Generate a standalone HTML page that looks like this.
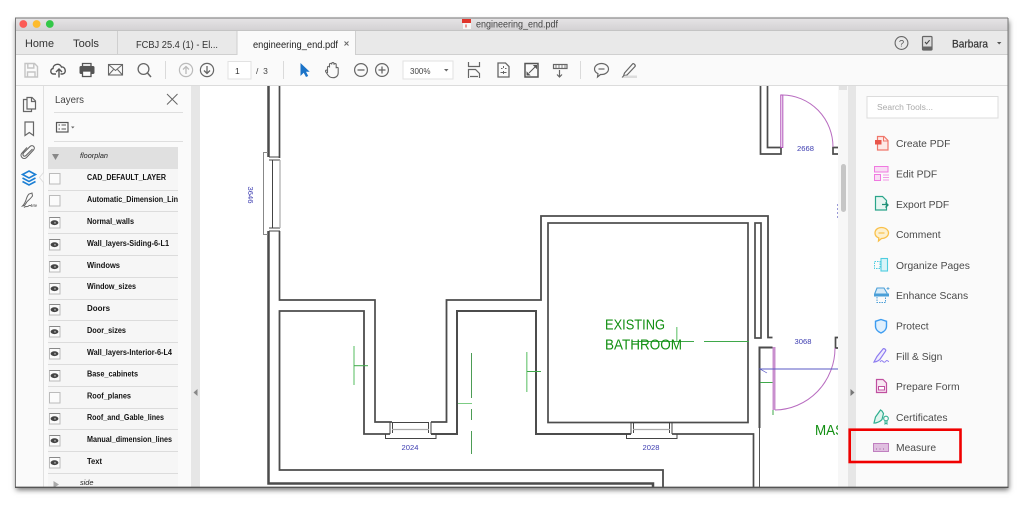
<!DOCTYPE html>
<html><head><meta charset="utf-8"><title>engineering_end.pdf</title>
<style>
html,body{margin:0;padding:0;background:#fff;width:1024px;height:505px;overflow:hidden}
#shadow{position:absolute;left:15px;top:18px;width:993px;height:469px;box-shadow:1px 3px 5px rgba(0,0,0,.55)}
svg{position:absolute;left:0;top:0;font-family:"Liberation Sans",sans-serif;filter:blur(.3px)}
.lay{font-size:8px;font-weight:bold;fill:#111}
.tool{font-size:10.3px;fill:#4a4a4a}
.dim{font-size:7.6px;fill:#3c3cb0}
.ic{fill:none;stroke:#666;stroke-width:1.4}
.w{fill:none;stroke:#4c4c4c;stroke-width:1.7}
.wt{fill:none;stroke:#555;stroke-width:1}
.gr{fill:none;stroke:#3fa84a;stroke-width:1}
</style></head><body>
<div id="shadow"></div>
<svg width="1024" height="505" viewBox="0 0 1024 505" xmlns="http://www.w3.org/2000/svg">
<defs>
<linearGradient id="tb" x1="0" y1="0" x2="0" y2="1"><stop offset="0" stop-color="#e6e4e6"/><stop offset="1" stop-color="#d2d0d2"/></linearGradient>
<clipPath id="docclip"><rect x="200" y="86" width="638" height="401"/></clipPath>
<g id="eye"><rect x="49.5" y="0" width="10.5" height="10.5" fill="#fbfbfb" stroke="#bbb"/><path d="M49.5 0H60" stroke="#888" stroke-width="1"/><ellipse cx="54.5" cy="5.2" rx="3.9" ry="2.4" fill="#444"/><circle cx="55" cy="5.2" r="1" fill="#999"/></g>
<g id="box"><rect x="49.5" y="0" width="10.5" height="10.5" fill="#fbfbfb" stroke="#bbb"/></g>
</defs>

<!-- window -->
<rect x="15" y="18" width="993" height="469" fill="#fafafa"/>
<rect x="15" y="18" width="993" height="13" fill="url(#tb)"/>
<rect x="15" y="30.5" width="993" height="24" fill="#e9e9e9"/>
<path d="M15 30.5H1008" stroke="#c4c4c4"/>
<rect x="15" y="55" width="993" height="30" fill="#fafafa"/>
<path d="M15 54.5H237M356 54.5H1008" stroke="#d0d0d0"/>
<path d="M15 85.5H1008" stroke="#dcdcdc"/>
<circle cx="23.3" cy="24" r="3.9" fill="#fc5b57"/>
<circle cx="36.6" cy="24" r="3.9" fill="#fdbb2e"/>
<circle cx="49.8" cy="24" r="3.9" fill="#33c748"/>

<!-- title -->
<rect x="463" y="20" width="8" height="9" fill="#f6f6f6"/><rect x="462" y="19" width="9" height="4" fill="#e0352b"/><path d="M466 24.5v3" stroke="#e0352b"/>
<text x="476" y="27.5" font-size="9.8" fill="#444" textLength="82" lengthAdjust="spacingAndGlyphs">engineering_end.pdf</text>

<!-- tabs -->
<text x="25" y="47" font-size="11.2" fill="#333" textLength="29" lengthAdjust="spacingAndGlyphs">Home</text>
<text x="73" y="47" font-size="11.2" fill="#333" textLength="26" lengthAdjust="spacingAndGlyphs">Tools</text>
<path d="M117.5 31V54M237 31V55" stroke="#cfcfcf"/>
<text x="136" y="48" font-size="10" fill="#333" textLength="82" lengthAdjust="spacingAndGlyphs">FCBJ 25.4 (1) - El...</text>
<rect x="237.5" y="31" width="118" height="24.5" fill="#fafafa"/>
<path d="M237 31V55M355.500 31V55" stroke="#cfcfcf"/>
<text x="253" y="48" font-size="10" fill="#222" textLength="85" lengthAdjust="spacingAndGlyphs">engineering_end.pdf</text>
<path d="M344.500 41.500l4 4M348.500 41.500l-4 4" stroke="#666" stroke-width="1"/>
<circle cx="901.500" cy="43" r="6.400" fill="none" stroke="#666" stroke-width="1.100"/>
<text x="901.500" y="46.500" font-size="9.500" fill="#555" text-anchor="middle">?</text>
<rect x="922.500" y="36.500" width="9.500" height="13.500" rx="1" fill="#ddd" stroke="#666" stroke-width="1.200"/><rect x="922" y="46.500" width="10.500" height="3.500" fill="#666"/><path d="M925 42l1.600 1.800 3-3.600" fill="none" stroke="#444" stroke-width="1.100"/>
<text x="952" y="47.300" font-size="11" fill="#333" stroke="#333" stroke-width=".2" textLength="36" lengthAdjust="spacingAndGlyphs">Barbara</text>
<path d="M997 42h4.400l-2.200 2.500z" fill="#555"/>

<!-- toolbar -->
<g class="ic">
<path d="M25 63.500h9.500l3 3v10.500h-12.500z" stroke="#c4c4c4"/><path d="M27.800 64v4h6v-4M27.500 77v-5h7.500v5" stroke="#c4c4c4"/>
<path d="M56 74h-2.500c-3.500 0-3.500-5-.5-5.500 0-4.500 7-6 8.500-1.500 4-.5 5.500 6.500 1 7h-2" stroke="#555"/><path d="M59 77.500v-8.500M56 72l3-3 3 3" stroke="#555"/>
</g>
<path d="M82.500 63.500h8.500v3h-8.500z" fill="none" stroke="#555" stroke-width="1.300"/><rect x="79.500" y="66" width="15" height="8" rx="1.500" fill="#555"/><rect x="82.500" y="71" width="8.500" height="5.500" fill="#fff" stroke="#555" stroke-width="1.300"/>
<rect x="108.500" y="64.500" width="14" height="10.500" fill="none" stroke="#666" stroke-width="1.100"/><path d="M108.500 64.500l7 6 7-6M108.500 75l5-5.500M122.500 75l-5-5.500" fill="none" stroke="#666" stroke-width="1"/>
<circle cx="143.500" cy="69" r="5.400" fill="none" stroke="#666" stroke-width="1.300"/><path d="M147.500 73l3.500 4" stroke="#666" stroke-width="1.500"/>
<path d="M165.500 61V79" stroke="#dadada"/>
<circle cx="186" cy="70" r="6.600" fill="none" stroke="#bbb" stroke-width="1.200"/><path d="M186 74V66.500M183 69.500l3-3 3 3" fill="none" stroke="#bbb" stroke-width="1.300"/>
<circle cx="207" cy="70" r="6.600" fill="none" stroke="#666" stroke-width="1.200"/><path d="M207 66V73.500M204 70.500l3 3 3-3" fill="none" stroke="#666" stroke-width="1.300"/>
<rect x="228" y="61.500" width="23" height="17.500" fill="#fff" stroke="#e2e2e2"/>
<text x="235" y="74" font-size="8.500" fill="#333">1</text>
<text x="256" y="74" font-size="8.500" fill="#444" xml:space="preserve">/  3</text>
<path d="M283.500 61V79" stroke="#dadada"/>
<path d="M300.500 63v13l3.200-3.300 2.300 4.300 2.200-1-2.200-4.200h3.700z" fill="#1a73c8"/>
<path d="M327.500 73v-5.500c0-1.500 2-1.500 2 0v-3c0-1.500 2.200-1.500 2.200 0v-.800c0-1.500 2.300-1.500 2.300 0v1c0-1.500 2.200-1.500 2.200 0v3.500c0-1 2-1 2 0v4.500c0 3-2 5-5 5s-4-1-5.500-3l-2-3c-.8-1.300 1-2.200 1.800-1.200z" fill="none" stroke="#666" stroke-width="1.100"/>
<circle cx="361" cy="70" r="6.400" fill="none" stroke="#666" stroke-width="1.200"/><path d="M357.500 70h7" stroke="#666" stroke-width="1.300"/>
<circle cx="382" cy="70" r="6.400" fill="none" stroke="#666" stroke-width="1.200"/><path d="M378.500 70h7M382 66.500v7" stroke="#666" stroke-width="1.300"/>
<rect x="403" y="61" width="50" height="18" fill="#fff" stroke="#e2e2e2"/>
<text x="410" y="74" font-size="8.500" fill="#444" textLength="20.500" lengthAdjust="spacingAndGlyphs">300%</text>
<path d="M444 69h4.500l-2.200 2.500z" fill="#666"/>
<path d="M468.500 62v4.500h11V62M468.500 78v-8.500h7l4 4V78M470 76.500h8" fill="none" stroke="#666" stroke-width="1.200"/>
<path d="M498 63h7.500l3.500 3.500V77h-11z" fill="none" stroke="#666" stroke-width="1.300"/><path d="M501 68.500h1.500M505 68.500h1.500M503.500 66v2M503.500 71v3M500.500 72.500h6" stroke="#666" stroke-width="1"/>
<rect x="525" y="63.500" width="13" height="13.500" fill="none" stroke="#555" stroke-width="1.500"/><path d="M534 65.500h2.500v2.500zM527 75v-2.500l2.500 2.500zM529 73l6-6" fill="#555" stroke="#555" stroke-width="1"/>
<rect x="553.500" y="64.500" width="13.500" height="4" fill="none" stroke="#666" stroke-width="1.200"/><path d="M556 65v3M559 65v3M562 65v3M565 65v3" stroke="#666" stroke-width=".8"/><path d="M559.500 70v7M557 74.500l2.500 2.500 2.500-2.500" fill="none" stroke="#666" stroke-width="1.200"/>
<path d="M580.500 61V79" stroke="#dadada"/>
<path d="M601.500 63.500c4 0 7 2.500 7 5.500s-3 5.500-7 5.500l-1 0-3 2.500.5-3.300c-2-1-3.500-2.800-3.500-4.700 0-3 3-5.500 7-5.500z" fill="none" stroke="#666" stroke-width="1.200"/><path d="M598.500 69h6" stroke="#666" stroke-width="1.200"/>
<path d="M624.500 73l8-9c1-1 3.500 1 2.500 2.500l-8 8.500-3.500 1z" fill="none" stroke="#666" stroke-width="1.200"/><rect x="623" y="75.500" width="14" height="2.500" fill="#ddd"/><path d="M622 77.500l2.500-2.500" stroke="#666"/>

<!-- left rail -->
<path d="M43.500 86V487" stroke="#e0e0e0"/>
<g fill="none" stroke="#666" stroke-width="1.200">
<path d="M26.500 99.500h-3v12h8v-2.500"/><path d="M27 97.500h5l3.500 3.500v8h-8.500z"/><path d="M31.500 98v3.500h3.500"/>
<path d="M25 122h8.500v13.500l-4.200-3-4.300 3z"/>
<path d="M32.500 149l-6.500 6.500c-2 2-4-.5-2.500-2.500l6.500-6.500c2.500-2.500 6 1 3.500 3.500l-7 7.500c-3 3-7.500-1.500-4.500-4.500l5-5.500" stroke-width="1.100"/>
<path d="M22.500 206c4.500-4.500 3-8.500 6.500-12l3-1 .5 3c-3 4-5.500 5-6 6.500l-2 3zM24 207.500c2-2 3 0 4.500-1.500s2 0 3 0" stroke-width="1"/>
</g>
<text x="31" y="207" font-size="4.500" fill="#555">Me</text>
<g fill="none" stroke="#1c7fd4" stroke-width="1.600"><path d="M29 171l6.500 3.500-6.500 3.500-6.500-3.500z"/><path d="M22.500 178l6.500 3.500 6.500-3.500"/><path d="M22.500 181.500l6.500 3.500 6.500-3.500"/></g>
<path d="M43.500 172.500l-4 5 4 5" fill="#fafafa" stroke="#ddd"/>

<!-- layers panel -->
<text x="55" y="103" font-size="10.500" fill="#444" textLength="29" lengthAdjust="spacingAndGlyphs">Layers</text>
<path d="M167 94l10.500 10.500M177.500 94L167 104.500" stroke="#666" stroke-width="1"/>
<path d="M54 112.500H183M54 141.500H183" stroke="#dedede"/>
<rect x="56.500" y="122.500" width="11.500" height="9.500" fill="none" stroke="#555" stroke-width="1.200"/><path d="M58.500 125h1.500M58.500 129h1.500M61.500 125h4.500M61.500 129h4.500" stroke="#555"/><path d="M71 126.500h3.500l-1.700 2z" fill="#666"/>
<rect x="48" y="147" width="130" height="22" fill="#e0e0e0"/>
<path d="M52 154h7l-3.500 6z" fill="#888"/>
<text x="80" y="158" font-size="7.600" font-style="italic" fill="#222" textLength="28" lengthAdjust="spacingAndGlyphs">floorplan</text>
<rect x="48" y="169" width="130" height="318" fill="#f6f6f6"/>
<path d="M48 190.500H178M48 211.500H178M48 233.500H178M48 255.500H178M48 277.500H178M48 299.500H178M48 320.500H178M48 342.500H178M48 364.500H178M48 386.500H178M48 408.500H178M48 429.500H178M48 451.500H178M48 473.500H178" stroke="#dcdcdc" stroke-width="1"/>
<use href="#box" y="173.500"/><text class="lay" x="87" y="180" textLength="79" lengthAdjust="spacingAndGlyphs">CAD_DEFAULT_LAYER</text>
<use href="#box" y="195.500"/><text class="lay" x="87" y="202" textLength="91" lengthAdjust="spacingAndGlyphs">Automatic_Dimension_Lin</text>
<use href="#eye" y="217.500"/><text class="lay" x="87" y="224" textLength="47" lengthAdjust="spacingAndGlyphs">Normal_walls</text>
<use href="#eye" y="239.500"/><text class="lay" x="87" y="246" textLength="82" lengthAdjust="spacingAndGlyphs">Wall_layers-Siding-6-L1</text>
<use href="#eye" y="261.500"/><text class="lay" x="87" y="268" textLength="33" lengthAdjust="spacingAndGlyphs">Windows</text>
<use href="#eye" y="283.500"/><text class="lay" x="87" y="289" textLength="49" lengthAdjust="spacingAndGlyphs">Window_sizes</text>
<use href="#eye" y="304.500"/><text class="lay" x="87" y="311" textLength="23" lengthAdjust="spacingAndGlyphs">Doors</text>
<use href="#eye" y="326.500"/><text class="lay" x="87" y="333" textLength="39" lengthAdjust="spacingAndGlyphs">Door_sizes</text>
<use href="#eye" y="348.500"/><text class="lay" x="87" y="355" textLength="85" lengthAdjust="spacingAndGlyphs">Wall_layers-Interior-6-L4</text>
<use href="#eye" y="370.500"/><text class="lay" x="87" y="376.500" textLength="51" lengthAdjust="spacingAndGlyphs">Base_cabinets</text>
<use href="#box" y="392.500"/><text class="lay" x="87" y="398.500" textLength="44" lengthAdjust="spacingAndGlyphs">Roof_planes</text>
<use href="#eye" y="413.500"/><text class="lay" x="87" y="420" textLength="77" lengthAdjust="spacingAndGlyphs">Roof_and_Gable_lines</text>
<use href="#eye" y="435.500"/><text class="lay" x="87" y="442" textLength="85" lengthAdjust="spacingAndGlyphs">Manual_dimension_lines</text>
<use href="#eye" y="457.500"/><text class="lay" x="87" y="464" textLength="15" lengthAdjust="spacingAndGlyphs">Text</text>
<path d="M53.500 481l5.500 3.500-5.500 3.500z" fill="#aaa"/>
<text x="80" y="485" font-size="7.600" font-style="italic" fill="#222" textLength="13.500" lengthAdjust="spacingAndGlyphs">side</text>

<!-- gutters -->
<rect x="191" y="86" width="9" height="401" fill="#e6e6e6"/>
<path d="M197.500 389v7l-4-3.500z" fill="#888"/>
<rect x="848" y="86" width="8" height="401" fill="#e6e6e6"/>
<path d="M850.500 389v7l4-3.500z" fill="#777"/>

<!-- document -->
<rect x="200" y="86" width="638" height="401" fill="#fff"/>
<g clip-path="url(#docclip)">
<g class="w">
<path d="M268.500 85V157" stroke-width="2.500"/><path d="M279.500 85V158"/>
<path d="M268.500 231V483.500H653V487" stroke-width="2.500"/>
<path d="M279.500 231V300H375V422H392"/>
<path d="M390 434H364V311H279.500V470H663V488" stroke-width="1.800"/>
<path d="M431 434H457V311H536V434H631" stroke-width="2"/>
<path d="M672 434H753.500V488"/>
<path d="M431 422H446.500V300H541V216H768V337.500H772.500" stroke-width="1.800"/>
<rect x="548" y="223" width="200" height="199.500"/>
<rect x="755" y="223" width="6" height="115"/>
<path d="M772.500 347.500H759.500V428" stroke-width="2"/>
<path d="M760.500 85V154H781V147.500H767.500V85"/>
<path d="M838 147.500H833V154H838"/>
<path d="M838 337.500H835.500V348H838"/>
</g>
<path d="M759.500 428V488" class="wt"/>
<!-- left window -->
<path d="M268 152.500H263.500V234.500H268" fill="none" stroke="#888" stroke-width="1"/>
<path d="M269 157H280M269 160H280M269 228H280M269 231H280M272.500 160V228" fill="none" stroke="#444" stroke-width="1"/>
<path d="M280 160V228" stroke="#aaa" stroke-width="1.200"/>
<!-- windows -->
<g fill="none" stroke="#444" stroke-width="1">
<path d="M392 422.500H429M390 422V434M392.500 422V433M428.500 422V433M431 422V434M385.500 434V438.500H436V434"/>
<path d="M631 422.500H670M631 422V434M633.500 422V433M669.500 422V433M672 422V434M626.500 434V438.500H677V434"/>
</g>
<path d="M392 429.500H429M633 429.500H670" stroke="#aaa" stroke-width="1.300"/>
<!-- doors -->
<rect x="780.800" y="95" width="2" height="52.500" fill="#fff" stroke="#b050b8" stroke-width="1"/>
<path d="M782.500 95A51 52 0 0 1 833 147" fill="none" stroke="#b86cc0" stroke-width="1"/>
<rect x="772.500" y="347" width="3" height="63" fill="#c98fce"/>
<path d="M775 410A61 62 0 0 0 835 348" fill="none" stroke="#b86cc0" stroke-width="1"/>
<path d="M759 369H838" stroke="#5a5ac4" stroke-width="1"/>
<path d="M760 369l7 4" stroke="#5a5ac4" stroke-width=".7"/>
<path d="M760 382.500H772.500M773 410V415" stroke="#3fa84a" stroke-width="1"/>
<!-- green marks -->
<g class="gr">
<path d="M354 346V385" stroke-width="1.300" stroke="#7ccc84"/><path d="M354 365.700H368"/>
<path d="M471.500 353V398M471.500 409V420M471.500 431V454" stroke="#4c9c55"/><path d="M458 403.500H472" stroke="#7ccc84"/>
<path d="M526.800 352V392" stroke-width="1.300" stroke="#7ccc84"/><path d="M527 371.500H541"/>
<path d="M676.800 327V342" stroke="#7ccc84" stroke-width="1.300"/>
<path d="M632 341.500H694M704 341.500H749"/>
</g>
<text x="605" y="329.500" font-size="15" fill="#128f12" textLength="60" lengthAdjust="spacingAndGlyphs">EXISTING</text>
<text x="605" y="349.500" font-size="15" fill="#128f12" textLength="77" lengthAdjust="spacingAndGlyphs">BATHROOM</text>
<text x="815" y="435" font-size="15" fill="#128f12" textLength="29" lengthAdjust="spacingAndGlyphs">MAS</text>
<text class="dim" x="410" y="450" text-anchor="middle">2024</text>
<text class="dim" x="651" y="450" text-anchor="middle">2028</text>
<text class="dim" x="805.500" y="151" text-anchor="middle">2668</text>
<text class="dim" x="803" y="344" text-anchor="middle">3068</text>
<text class="dim" transform="translate(248,195) rotate(90)" text-anchor="middle">3646</text>
</g>

<!-- scrollbar -->
<rect x="838" y="86" width="10" height="401" fill="#f7f7f7"/>
<rect x="839" y="86" width="8" height="4" fill="#e2e2e2"/>
<rect x="841" y="164" width="5" height="48" rx="2.500" fill="#c6c6c6"/>
<path d="M837.500 204v15" stroke="#9a9ad8" stroke-width="1" stroke-dasharray="2 2"/>

<!-- right panel -->
<rect x="867" y="96.500" width="131" height="21.500" fill="#fff" stroke="#dcdcdc"/>
<text x="877" y="110" font-size="8.600" fill="#aaa" textLength="56" lengthAdjust="spacingAndGlyphs">Search Tools...</text>

<!-- create -->
<path d="M877.500 136.500h6.500l4 4v9.500h-10.500z" fill="#fde8e5" stroke="#f0766a" stroke-width="1.200"/><rect x="875" y="140" width="6.500" height="4.500" fill="#e8554a"/><path d="M883.500 137v4h4" fill="none" stroke="#f0766a"/>
<text class="tool" x="896" y="147">Create PDF</text>
<!-- edit -->
<rect x="874.500" y="166.500" width="13.500" height="5.500" fill="#f8dcf4" stroke="#f078e0"/><rect x="874.500" y="174.500" width="6" height="6" fill="#f8dcf4" stroke="#f078e0"/><path d="M883 175h6M883 177.500h6M883 180h6" stroke="#f078e0" stroke-width=".8"/>
<text class="tool" x="896" y="177.500">Edit PDF</text>
<!-- export -->
<path d="M875.500 196.500h7l4 4v9.500h-11z" fill="#e8f6f2" stroke="#2aa58a" stroke-width="1.200"/><path d="M882 204.500h6M885.500 202.500l2.500 2.500-2.500 2.500" fill="none" stroke="#1f8f76" stroke-width="1.300"/>
<text class="tool" x="896" y="208">Export PDF</text>
<!-- comment -->
<path d="M881.500 227.500c4 0 7 2.500 7 5.500s-3 5.500-7 5.500l-3 2.500.3-3c-2.500-1-3.800-3-3.800-5 0-3 2.500-5.500 6.500-5.500z" fill="#fdf0cf" stroke="#f9c04a" stroke-width="1.300"/><path d="M878.500 233h6" stroke="#f9c04a" stroke-width="1.200"/>
<text class="tool" x="896" y="238">Comment</text>
<!-- organize -->
<rect x="881" y="258.500" width="6.500" height="12.500" fill="#d8f4f8" stroke="#4fcde0" stroke-width="1.100"/><rect x="874.500" y="261.500" width="5.500" height="7" fill="none" stroke="#4fcde0" stroke-dasharray="1.500 1"/>
<text class="tool" x="896" y="269">Organize Pages</text>
<!-- enhance -->
<path d="M877 288h7l3 5v3h-12v-3z" fill="#d8ebf8" stroke="#4a9fd8" stroke-width="1.100"/><rect x="874" y="293.500" width="15" height="3" fill="#4a9fd8"/><path d="M877 297v5.500h8.500V297" fill="none" stroke="#4a9fd8" stroke-dasharray="1.500 1"/><path d="M888 287v3M886.500 288.500h3" stroke="#4a9fd8" stroke-width=".8"/>
<text class="tool" x="896" y="299">Enhance Scans</text>
<!-- protect -->
<path d="M881 319.500l5.500 1.800v5c0 3-2.500 5.500-5.500 6.700-3-1.200-5.500-3.700-5.500-6.700v-5z" fill="#e0f0fd" stroke="#3d9cf0" stroke-width="1.400"/>
<text class="tool" x="896" y="329.500">Protect</text>
<!-- fill -->
<path d="M874 362l3-5.500 6-7.500c1-1.200 3.500.8 2.500 2.200l-5.500 8c-1.500 1.800-4 2.500-6 2.800z" fill="#efecfd" stroke="#8d7cf0" stroke-width="1.200"/><path d="M880 362c1.500-2 2-1.500 3-.5s2 1 3-.5 2 .5 3 .5" fill="none" stroke="#8d7cf0"/>
<text class="tool" x="896" y="360">Fill &amp; Sign</text>
<!-- prepare -->
<path d="M876.500 379.500h6.500l3.500 3.500v9.500h-10z" fill="#f8e6f2" stroke="#c050a0" stroke-width="1.200"/><rect x="878.500" y="386.500" width="6" height="3.500" fill="#fff" stroke="#c050a0"/>
<text class="tool" x="896" y="390">Prepare Form</text>
<!-- cert -->
<path d="M874 423l1.500-6 5-7 1.500 1 1.500 2.500-1.500 6c-2 2.500-5 3-6.500 3.500z" fill="#e0f5ee" stroke="#2fae90" stroke-width="1.200"/><circle cx="886" cy="418.500" r="2.300" fill="none" stroke="#2fae90" stroke-width="1.100"/><path d="M885 421v3l1-.8 1 .8v-3" fill="none" stroke="#2fae90"/>
<text class="tool" x="896" y="421">Certificates</text>
<!-- measure -->
<rect x="873.500" y="443.500" width="15" height="8" fill="#e0bfe0" stroke="#c080c0" stroke-width="1"/><path d="M876 449h1M879.500 449h1M883 449h1" stroke="#a060a0"/>
<text class="tool" x="896" y="451">Measure</text>

<!-- red highlight -->
<rect x="849.700" y="429.700" width="110.800" height="32.300" fill="none" stroke="#f00000" stroke-width="2.600"/>

<!-- window edge -->
<path d="M15.500 18V487M1008 18V487" stroke="#777" stroke-width="1"/>
<path d="M15 18H1008" stroke="#777" stroke-width="1"/>
<path d="M15 487.300H1008.500" stroke="#555" stroke-width="1.300"/>
</svg>
</body></html>
